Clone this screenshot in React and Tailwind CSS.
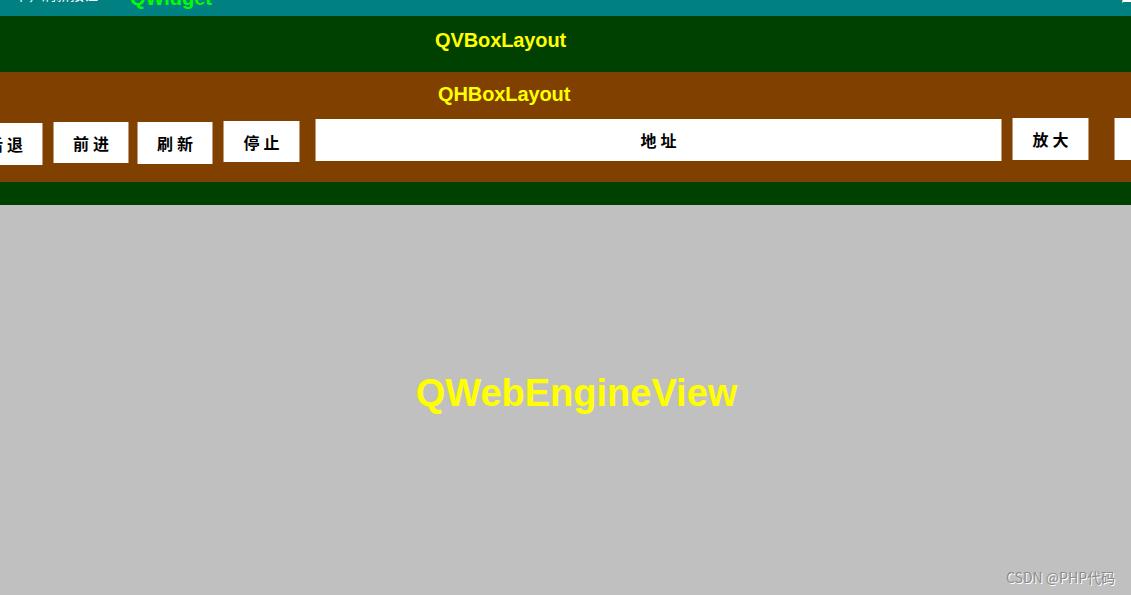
import React from "react";

const sans = { fontFamily: '"Liberation Sans", Arial, sans-serif' };
const cjk = { fontFamily: '"Noto Sans CJK SC", "Liberation Sans", sans-serif' };

function NavButton({ label, className }) {
  return (
    <div
      className={`shrink-0 flex items-center justify-center bg-white border-x border-[#c09a78] text-black font-bold text-[16px] tracking-[4px] pl-[4px] ${className}`}
      style={cjk}
    >
      {label}
    </div>
  );
}

export default function App() {
  return (
    <div className="w-[1131px] h-[595px] overflow-hidden flex flex-col bg-[#c0c0c0]" style={sans}>
      {/* window title strip, scrolled partly out of view */}
      <div className="h-[16px] shrink-0 bg-[#008080] flex items-start overflow-hidden">
        <span className="shrink-0 ml-[14px] mt-[-14px] text-[14px] leading-[16px] text-white whitespace-nowrap" style={cjk}>
          十，刷新按钮
        </span>
        <span className="shrink-0 ml-[32px] mt-[-12px] text-[20px] leading-[20px] font-bold text-[#00ff00] whitespace-nowrap">
          QWidget
        </span>
        <div className="ml-auto w-[9px] h-[3px] border-l border-[#a0c8c8] flex items-start">
          <div className="w-full h-[2px] bg-white" />
        </div>
      </div>

      {/* outer vertical layout */}
      <div className="h-[56px] shrink-0 bg-[#004000] flex items-center">
        <span className="ml-[435px] mt-[-9px] text-[20px] tracking-[-0.1px] font-bold text-[#ffff00]">QVBoxLayout</span>
      </div>

      {/* horizontal layout holding the navigation bar */}
      <div className="h-[110px] shrink-0 bg-[#804000] flex flex-col">
        <div className="h-[44px] shrink-0 flex items-center">
          <span className="ml-[438px] mt-[-1px] text-[20px] tracking-[-0.1px] font-bold text-[#ffff00]">QHBoxLayout</span>
        </div>
        <div className="flex items-start">
          <NavButton label="后退" className="ml-[-33px] mt-[7px] w-[76px] h-[42px]" />
          <NavButton label="前进" className="ml-[10px] mt-[6px] w-[76px] h-[41px]" />
          <NavButton label="刷新" className="ml-[8px] mt-[6px] w-[76px] h-[42px]" />
          <NavButton label="停止" className="ml-[10px] mt-[5px] w-[77px] h-[41px]" />
          <NavButton label="地址" className="ml-[15px] mt-[3px] w-[687px] h-[42px]" />
          <NavButton label="放大" className="ml-[10px] mt-[2px] w-[77px] h-[42px]" />
          <NavButton label="缩小" className="ml-[25px] mt-[2px] w-[77px] h-[42px]" />
        </div>
      </div>

      <div className="h-[23px] shrink-0 bg-[#004000]" />

      {/* web view area */}
      <div className="flex-1 flex flex-col bg-[#c0c0c0]">
        <div className="flex-1 flex items-center justify-center pt-[14px] pl-[22px]">
          <span className="text-[38px] font-bold text-[#ffff00]">QWebEngineView</span>
        </div>
        <div className="flex justify-end pr-[16px] pb-[7px]">
          <span
            className="text-[14px] text-[#8c8c8c] [text-shadow:1px_1px_0_#ffffff]"
            style={cjk}
          >
            CSDN @PHP代码
          </span>
        </div>
      </div>
    </div>
  );
}
